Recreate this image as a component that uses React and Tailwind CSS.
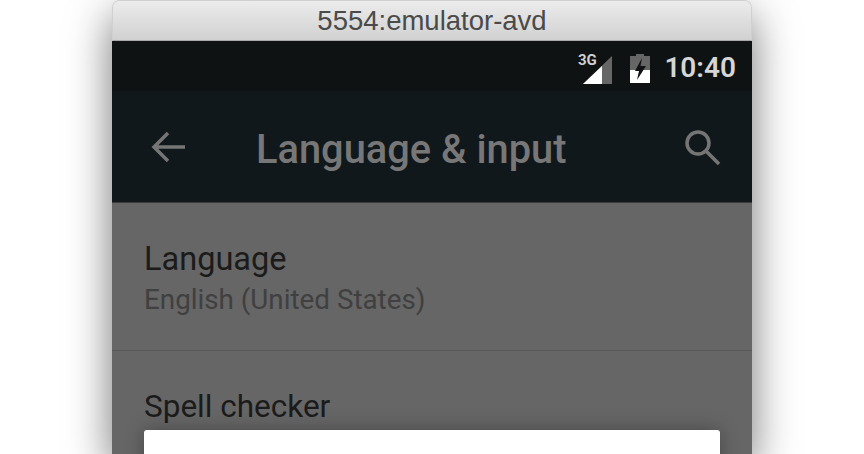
const StatusIcons = () => (
  <>
    <svg width="36" height="34" viewBox="0 0 36 34" className="mr-[16px]">
      <path d="M35 5V33H6Z" fill="#666" />
      <path d="M25 15V33H6Z" fill="#fff" />
      <text x="1" y="14" fontFamily="Roboto, sans-serif" fontWeight="700" fontSize="15" fill="#d0d0d0">3G</text>
    </svg>
    <svg width="22" height="34" viewBox="0 0 22 34" className="mr-[13px]">
      <path d="M7 3H15V5H21V32H1V5H7Z" fill="#666" />
      <path d="M1 19H21V32H1Z" fill="#fff" />
      <path d="M13 7L6 20H10L8 29L17 15H11.500Z" fill="#0e1213" />
    </svg>
  </>
);

const App = () => {
  return (
    <div className="w-[864px] h-[454px] overflow-hidden bg-white font-['Roboto',sans-serif]">
      <div className="relative w-[640px] h-[454px] ml-[112px] flex flex-col shadow-[0_16px_44px_rgba(0,0,0,0.55)] rounded-t-[7px]">
        {/* Title bar */}
        <div className="h-[41px] shrink-0 flex items-center justify-center rounded-t-[7px] border border-b-[#a9a9a9] border-[#d0d0d0] bg-gradient-to-b from-[#ececec] to-[#d1d1d1] text-[27.500px] text-[#4a4a4a] font-['Liberation_Sans',sans-serif]">
          5554:emulator-avd
        </div>

        {/* Status bar */}
        <div className="h-[50px] shrink-0 flex items-center justify-end pr-[16px] pt-[3px] bg-[#0e1213]">
          <StatusIcons />
          <span className="text-[28px] font-semibold text-[#d6d6d6]">10:40</span>
        </div>

        {/* App bar */}
        <div className="h-[112px] shrink-0 flex items-center bg-[#11181b] border-b border-[#3a3d3e]">
          <svg width="38" height="38" viewBox="0 0 38 38" fill="none" stroke="#757575" strokeWidth="3.500" className="ml-[38px]">
            <path d="M35 19H5M18 5L4 19L18 33" />
          </svg>
          <span className="ml-[68px] pt-[6px] text-[39.800px] font-medium text-[#777777] leading-none">Language &amp; input</span>
          <svg width="38" height="38" viewBox="0 0 38 38" fill="none" stroke="#757575" strokeWidth="3.500" className="ml-auto mr-[30px]">
            <circle cx="14" cy="15" r="11" />
            <path d="M22 23L35 36" />
          </svg>
        </div>

        {/* Content */}
        <div className="flex-1 bg-[#666666] flex flex-col">
          <div className="h-[148px] shrink-0 pl-[32px] pt-[37px] border-b border-[#575757]">
            <div className="text-[32.500px] leading-[38px] text-[#1b1b1b]">Language</div>
            <div className="mt-[3px] text-[27.800px] leading-[38px] text-[#404040]">English (United States)</div>
          </div>
          <div className="pl-[32px] pt-[37px] text-[31.500px] leading-[38px] text-[#1b1b1b]">Spell checker</div>
        </div>

        {/* Dialog */}
        <div className="absolute left-[32px] top-[430px] w-[576px] h-[60px] bg-white rounded-[3px] shadow-[0_0_20px_rgba(0,0,0,0.3)]" />
      </div>
    </div>
  );
};

export default App;
